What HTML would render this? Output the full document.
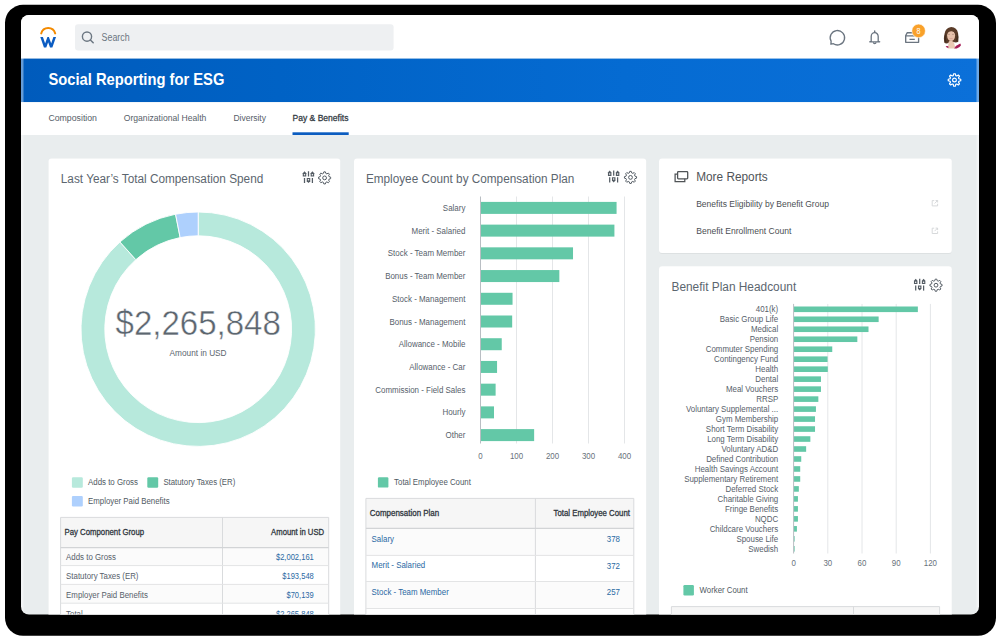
<!DOCTYPE html>
<html><head><meta charset="utf-8"><style>
*{margin:0;padding:0}
html,body{width:1000px;height:642px;overflow:hidden;background:#fff;font-family:"Liberation Sans",sans-serif}
svg{display:block}
</style></head><body>
<svg width="1000" height="642" viewBox="0 0 1000 642" font-family="Liberation Sans, sans-serif">
<defs><clipPath id="app"><rect x="21" y="15" width="958" height="599.5" rx="8"/></clipPath><linearGradient id="bg" x1="0" x2="1" y1="0" y2="0"><stop offset="0" stop-color="#005bbc"/><stop offset="0.27" stop-color="#0062c5"/><stop offset="0.63" stop-color="#056bd2"/><stop offset="1" stop-color="#0b70d9"/></linearGradient><filter id="sh" x="-5%" y="-5%" width="110%" height="110%"><feDropShadow dx="0" dy="0.5" stdDeviation="0.6" flood-color="#000" flood-opacity="0.10"/></filter></defs>
<rect x="5" y="4.8" width="991" height="631" rx="18" fill="#000"/>
<g clip-path="url(#app)">
<rect x="21" y="15" width="958" height="600" fill="#e9edee"/>
<rect x="21" y="15" width="958" height="43.6" fill="#fff"/>
<path d="M41.2 33.4 A7.27 7.27 0 0 1 55.2 33.4" fill="none" stroke="#f38a00" stroke-width="2" stroke-linecap="round"/>
<clipPath id="wclip"><rect x="38" y="37" width="20" height="11.2"/></clipPath>
<path clip-path="url(#wclip)" d="M41.1 35.5 L45.1 47.2 L48.15 38.6 L51.2 47.2 L55.2 35.5" fill="none" stroke="#0b5cc2" stroke-width="2.5" stroke-linejoin="miter" stroke-miterlimit="3"/>
<rect x="75" y="24.3" width="318.6" height="26.2" rx="3" fill="#eef0f2"/>
<circle cx="87" cy="36.6" r="4.6" fill="none" stroke="#6c7782" stroke-width="1.4"/>
<path d="M90.4 40 L93.2 42.8" stroke="#6c7782" stroke-width="1.5" stroke-linecap="round"/>
<text x="101.60" y="41.00" font-size="10" fill="#6c7681" text-anchor="start" textLength="28.00" lengthAdjust="spacingAndGlyphs">Search</text>
<path d="M833.4 43.7 A7.2 7.2 0 1 0 831.1 41.2 L830.9 44.2 Z" fill="none" stroke="#6b7580" stroke-width="1.35" stroke-linejoin="round"/>
<path d="M871.2 41.3 L871.2 36.5 A3.5 3.9 0 0 1 878.2 36.5 L878.2 41.3 L879.7 41.8 L869.7 41.8 Z" fill="none" stroke="#6b7580" stroke-width="1.3" stroke-linejoin="round"/>
<path d="M874.7 31 L874.7 32.4" stroke="#6b7580" stroke-width="1.4" stroke-linecap="round"/>
<path d="M873.4 42.3 A1.3 1.3 0 0 0 876 42.3" fill="none" stroke="#6b7580" stroke-width="1.2"/>
<path d="M905.7 42.3 L905.7 35.5 L907.3 32.7 L917.2 32.7 L918.6 35.5 L918.6 42.3 Z M905.7 35.8 L918.6 35.8" fill="none" stroke="#6b7580" stroke-width="1.35" stroke-linejoin="round"/>
<path d="M909.5 39.3 L914.8 39.3" stroke="#6b7580" stroke-width="1.3"/>
<circle cx="918.6" cy="30.9" r="6.8" fill="#f9a12a" stroke="#fff" stroke-width="0.6"/>
<text x="918.60" y="33.90" font-size="8.2" fill="#fff" text-anchor="middle" textLength="4.00" lengthAdjust="spacingAndGlyphs">8</text>
<g><path d="M944.2 42.5 Q943.3 38 944.6 33.5 Q945.5 27.6 951.2 27 Q957 27.3 958 33 Q959 37.5 958.3 41.8 Q956 43 953.5 42 L949 42.8 Q946 44.2 944.2 42.5 Z" fill="#5a3b28"/><path d="M944.5 40 Q944 36 945.5 33 L946.3 42.5 Q945 42.6 944.5 40 Z" fill="#3f2a1e"/><path d="M957.6 33 Q958.8 37 957.6 41.5 L956 41 Z" fill="#43301f"/><path d="M947.8 48.5 L948.6 42 Q949 40.5 951 41 Q953.3 40.7 954 42.5 L955.5 48.5 Z" fill="#ebc9b4"/><ellipse cx="951.1" cy="35.6" rx="4" ry="5.4" fill="#e7c1aa"/><path d="M946.8 34.5 Q947 29.5 951.3 29.6 Q955.2 29.8 955.4 34 Q954 31.2 951.5 31.3 Q948.5 31.2 946.8 34.5 Z" fill="#5e3f2b"/><path d="M949.3 38.6 L952.7 38.6" stroke="#d79b92" stroke-width="0.8"/><path d="M948.4 34.4 L949.6 34.4 M952.4 34.4 L953.6 34.4" stroke="#8a6a5c" stroke-width="0.7"/><path d="M954.2 48.4 Q956 45 960.3 43.4 L961 45.2 Q959.5 47.8 956.8 48.6 Z" fill="#a61c56"/><path d="M945.6 46.3 Q947 45.6 948.3 46.2 L948.4 48 Q946.5 47.8 945.6 46.3 Z" fill="#a61c56"/></g>
<rect x="21" y="58.6" width="958" height="43.6" fill="url(#bg)"/>
<text x="48.40" y="85.40" font-size="17" fill="#fff" text-anchor="start" font-weight="bold" textLength="176.00" lengthAdjust="spacingAndGlyphs">Social Reporting for ESG</text>
<path d="M953.22 75.58 L953.71 73.75 L955.29 73.75 L955.78 75.58 L956.72 75.97 L958.36 75.02 L959.48 76.14 L958.53 77.78 L958.92 78.72 L960.75 79.21 L960.75 80.79 L958.92 81.28 L958.53 82.22 L959.48 83.86 L958.36 84.98 L956.72 84.03 L955.78 84.42 L955.29 86.25 L953.71 86.25 L953.22 84.42 L952.28 84.03 L950.64 84.98 L949.52 83.86 L950.47 82.22 L950.08 81.28 L948.25 80.79 L948.25 79.21 L950.08 78.72 L950.47 77.78 L949.52 76.14 L950.64 75.02 L952.28 75.97 Z" fill="none" stroke="#fff" stroke-width="1.2" stroke-linejoin="round"/>
<circle cx="954.5" cy="80" r="1.9" fill="none" stroke="#fff" stroke-width="1.2"/>
<rect x="21" y="102.2" width="958" height="32.8" fill="#fff"/>
<text x="48.40" y="120.90" font-size="9.6" fill="#566069" text-anchor="start" textLength="48.60" lengthAdjust="spacingAndGlyphs">Composition</text>
<text x="123.80" y="120.90" font-size="9.6" fill="#566069" text-anchor="start" textLength="82.50" lengthAdjust="spacingAndGlyphs">Organizational Health</text>
<text x="233.40" y="120.90" font-size="9.6" fill="#566069" text-anchor="start" textLength="32.60" lengthAdjust="spacingAndGlyphs">Diversity</text>
<text x="292.60" y="120.90" font-size="9.6" fill="#333b43" text-anchor="start" stroke="#333b43" stroke-width="0.3" textLength="55.80" lengthAdjust="spacingAndGlyphs">Pay &amp; Benefits</text>
<rect x="292.5" y="132.3" width="56.2" height="2.7" fill="#0c5dc0"/>
<rect x="48.5" y="158.5" width="291.8" height="470" rx="3" fill="#fff" filter="url(#sh)"/>
<rect x="354" y="158.5" width="292.2" height="470" rx="3" fill="#fff" filter="url(#sh)"/>
<rect x="659" y="158.5" width="292.8" height="94.6" rx="3" fill="#fff" filter="url(#sh)"/>
<rect x="659" y="266.2" width="292.8" height="400" rx="3" fill="#fff" filter="url(#sh)"/>
<text x="60.80" y="182.60" font-size="12.5" fill="#5c666f" text-anchor="start" textLength="202.50" lengthAdjust="spacingAndGlyphs">Last Year’s Total Compensation Spend</text>
<path d="M304.50 171.30 L306.25 173.20 L306.25 176.60 L302.75 176.60 L302.75 173.20 Z" fill="#545c64"/>
<circle cx="304.50" cy="174.70" r="0.75" fill="#fff"/>
<path d="M304.50 178.00 L304.50 183.10" stroke="#545c64" stroke-width="1.25"/>
<path d="M308.50 171.30 L308.50 176.50" stroke="#545c64" stroke-width="1.25"/>
<path d="M306.75 177.90 L310.25 177.90 L310.25 181.20 L308.50 183.10 L306.75 181.20 Z" fill="#545c64"/>
<circle cx="308.50" cy="179.70" r="0.75" fill="#fff"/>
<path d="M312.40 171.30 L314.15 173.20 L314.15 176.60 L310.65 176.60 L310.65 173.20 Z" fill="#545c64"/>
<circle cx="312.40" cy="174.70" r="0.75" fill="#fff"/>
<path d="M312.40 178.00 L312.40 183.10" stroke="#545c64" stroke-width="1.25"/>
<path d="M323.32 173.48 L323.84 171.85 L325.36 171.85 L325.88 173.48 L326.82 173.87 L328.34 173.08 L329.42 174.16 L328.63 175.68 L329.02 176.62 L330.65 177.14 L330.65 178.66 L329.02 179.18 L328.63 180.12 L329.42 181.64 L328.34 182.72 L326.82 181.93 L325.88 182.32 L325.36 183.95 L323.84 183.95 L323.32 182.32 L322.38 181.93 L320.86 182.72 L319.78 181.64 L320.57 180.12 L320.18 179.18 L318.55 178.66 L318.55 177.14 L320.18 176.62 L320.57 175.68 L319.78 174.16 L320.86 173.08 L322.38 173.87 Z" fill="none" stroke="#545c64" stroke-width="1.0" stroke-linejoin="round"/>
<circle cx="324.6" cy="177.9" r="1.9" fill="none" stroke="#545c64" stroke-width="1.0"/>
<path d="M198.20 212.00 A117.2 117.2 0 1 1 119.94 241.96 L135.83 259.68 A93.4 93.4 0 1 0 198.20 235.80 Z" fill="#b7e9dc" stroke="#fff" stroke-width="0.9"/>
<path d="M119.94 241.96 A117.2 117.2 0 0 1 175.55 214.21 L180.15 237.56 A93.4 93.4 0 0 0 135.83 259.68 Z" fill="#63c8a7" stroke="#fff" stroke-width="0.9"/>
<path d="M175.55 214.21 A117.2 117.2 0 0 1 198.20 212.00 L198.20 235.80 A93.4 93.4 0 0 0 180.15 237.56 Z" fill="#aed0fd" stroke="#fff" stroke-width="0.9"/>
<text x="198.20" y="334.90" font-size="35.5" fill="#5c666f" text-anchor="middle" stroke="#fff" stroke-width="0.45" textLength="165.30" lengthAdjust="spacingAndGlyphs">$2,265,848</text>
<text x="169.60" y="356.20" font-size="9" fill="#5c666f" text-anchor="start" textLength="57.00" lengthAdjust="spacingAndGlyphs">Amount in USD</text>
<rect x="71.9" y="477.3" width="10.9" height="10.5" rx="1.2" fill="#b7e9dc"/>
<text x="88.00" y="485.30" font-size="8.5" fill="#4f5962" text-anchor="start" textLength="50.00" lengthAdjust="spacingAndGlyphs">Adds to Gross</text>
<rect x="147.3" y="477.3" width="10.9" height="10.5" rx="1.2" fill="#63c8a7"/>
<text x="163.40" y="485.30" font-size="8.5" fill="#4f5962" text-anchor="start" textLength="71.90" lengthAdjust="spacingAndGlyphs">Statutory Taxes (ER)</text>
<rect x="71.9" y="495.9" width="10.9" height="10.5" rx="1.2" fill="#aed0fd"/>
<text x="88.00" y="503.90" font-size="8.5" fill="#4f5962" text-anchor="start" textLength="81.60" lengthAdjust="spacingAndGlyphs">Employer Paid Benefits</text>
<rect x="60.6" y="517.4" width="268.09999999999997" height="30.200000000000045" fill="#f6f6f6"/>
<rect x="60.6" y="547.6" width="268.09999999999997" height="18.0" fill="#fbfbfb"/>
<rect x="60.6" y="565.6" width="268.09999999999997" height="18.799999999999955" fill="#ffffff"/>
<rect x="60.6" y="584.4" width="268.09999999999997" height="18.800000000000068" fill="#fbfbfb"/>
<rect x="60.6" y="603.2" width="268.09999999999997" height="36.799999999999955" fill="#ffffff"/>
<path d="M60.6 700 L60.6 517.4 L328.7 517.4 L328.7 700" fill="none" stroke="#d9dbdd" stroke-width="1"/>
<path d="M222.5 517.4 L222.5 700" stroke="#d9dbdd" stroke-width="1"/>
<path d="M60.6 547.6 L328.7 547.6" stroke="#d2d4d6" stroke-width="1.3"/>
<path d="M60.6 565.6 L328.7 565.6" stroke="#e3e4e5" stroke-width="1"/>
<path d="M60.6 584.4 L328.7 584.4" stroke="#e3e4e5" stroke-width="1"/>
<path d="M60.6 603.2 L328.7 603.2" stroke="#e3e4e5" stroke-width="1"/>
<path d="M60.6 640 L328.7 640" stroke="#e3e4e5" stroke-width="1"/>
<text x="64.50" y="535.40" font-size="8.5" fill="#30373e" text-anchor="start" stroke="#30373e" stroke-width="0.3" textLength="79.60" lengthAdjust="spacingAndGlyphs">Pay Component Group</text>
<text x="324.10" y="535.40" font-size="8.5" fill="#30373e" text-anchor="end" stroke="#30373e" stroke-width="0.3" textLength="53.00" lengthAdjust="spacingAndGlyphs">Amount in USD</text>
<text x="66.10" y="560.20" font-size="8.5" fill="#56606a" text-anchor="start" textLength="49.82" lengthAdjust="spacingAndGlyphs">Adds to Gross</text>
<text x="313.80" y="560.20" font-size="8.5" fill="#2a69a3" text-anchor="end" textLength="37.86" lengthAdjust="spacingAndGlyphs">$2,002,161</text>
<text x="66.10" y="579.00" font-size="8.5" fill="#56606a" text-anchor="start" textLength="72.39" lengthAdjust="spacingAndGlyphs">Statutory Taxes (ER)</text>
<text x="313.80" y="579.00" font-size="8.5" fill="#2a69a3" text-anchor="end" textLength="31.55" lengthAdjust="spacingAndGlyphs">$193,548</text>
<text x="66.10" y="597.80" font-size="8.5" fill="#56606a" text-anchor="start" textLength="81.73" lengthAdjust="spacingAndGlyphs">Employer Paid Benefits</text>
<text x="313.80" y="597.80" font-size="8.5" fill="#2a69a3" text-anchor="end" textLength="27.35" lengthAdjust="spacingAndGlyphs">$70,139</text>
<text x="66.10" y="616.60" font-size="8.5" fill="#56606a" text-anchor="start" textLength="16.61" lengthAdjust="spacingAndGlyphs">Total</text>
<text x="313.80" y="616.60" font-size="8.5" fill="#2a69a3" text-anchor="end" textLength="37.86" lengthAdjust="spacingAndGlyphs">$2,265,848</text>
<text x="365.90" y="183.00" font-size="12.5" fill="#5c666f" text-anchor="start" textLength="208.50" lengthAdjust="spacingAndGlyphs">Employee Count by Compensation Plan</text>
<path d="M609.70 170.60 L611.45 172.50 L611.45 175.90 L607.95 175.90 L607.95 172.50 Z" fill="#545c64"/>
<circle cx="609.70" cy="174.00" r="0.75" fill="#fff"/>
<path d="M609.70 177.30 L609.70 182.40" stroke="#545c64" stroke-width="1.25"/>
<path d="M613.70 170.60 L613.70 175.80" stroke="#545c64" stroke-width="1.25"/>
<path d="M611.95 177.20 L615.45 177.20 L615.45 180.50 L613.70 182.40 L611.95 180.50 Z" fill="#545c64"/>
<circle cx="613.70" cy="179.00" r="0.75" fill="#fff"/>
<path d="M617.60 170.60 L619.35 172.50 L619.35 175.90 L615.85 175.90 L615.85 172.50 Z" fill="#545c64"/>
<circle cx="617.60" cy="174.00" r="0.75" fill="#fff"/>
<path d="M617.60 177.30 L617.60 182.40" stroke="#545c64" stroke-width="1.25"/>
<path d="M629.22 172.98 L629.74 171.35 L631.26 171.35 L631.78 172.98 L632.72 173.37 L634.24 172.58 L635.32 173.66 L634.53 175.18 L634.92 176.12 L636.55 176.64 L636.55 178.16 L634.92 178.68 L634.53 179.62 L635.32 181.14 L634.24 182.22 L632.72 181.43 L631.78 181.82 L631.26 183.45 L629.74 183.45 L629.22 181.82 L628.28 181.43 L626.76 182.22 L625.68 181.14 L626.47 179.62 L626.08 178.68 L624.45 178.16 L624.45 176.64 L626.08 176.12 L626.47 175.18 L625.68 173.66 L626.76 172.58 L628.28 173.37 Z" fill="none" stroke="#545c64" stroke-width="1.0" stroke-linejoin="round"/>
<circle cx="630.5" cy="177.4" r="1.9" fill="none" stroke="#545c64" stroke-width="1.0"/>
<path d="M516.50 196.5 L516.50 443.5" stroke="#e4e6e8" stroke-width="1"/>
<path d="M552.50 196.5 L552.50 443.5" stroke="#e4e6e8" stroke-width="1"/>
<path d="M588.50 196.5 L588.50 443.5" stroke="#e4e6e8" stroke-width="1"/>
<path d="M624.50 196.5 L624.50 443.5" stroke="#e4e6e8" stroke-width="1"/>
<rect x="480.50" y="201.90" width="136.08" height="12" fill="#63c8a7"/>
<text x="465.40" y="210.90" font-size="8.5" fill="#56606a" text-anchor="end" textLength="22.53" lengthAdjust="spacingAndGlyphs">Salary</text>
<rect x="480.50" y="224.62" width="133.92" height="12" fill="#63c8a7"/>
<text x="465.40" y="233.62" font-size="8.5" fill="#56606a" text-anchor="end" textLength="53.88" lengthAdjust="spacingAndGlyphs">Merit - Salaried</text>
<rect x="480.50" y="247.34" width="92.52" height="12" fill="#63c8a7"/>
<text x="465.40" y="256.34" font-size="8.5" fill="#56606a" text-anchor="end" textLength="77.59" lengthAdjust="spacingAndGlyphs">Stock - Team Member</text>
<rect x="480.50" y="270.06" width="78.84" height="12" fill="#63c8a7"/>
<text x="465.40" y="279.06" font-size="8.5" fill="#56606a" text-anchor="end" textLength="80.25" lengthAdjust="spacingAndGlyphs">Bonus - Team Member</text>
<rect x="480.50" y="292.78" width="32.04" height="12" fill="#63c8a7"/>
<text x="465.40" y="301.78" font-size="8.5" fill="#56606a" text-anchor="end" textLength="73.33" lengthAdjust="spacingAndGlyphs">Stock - Management</text>
<rect x="480.50" y="315.50" width="31.68" height="12" fill="#63c8a7"/>
<text x="465.40" y="324.50" font-size="8.5" fill="#56606a" text-anchor="end" textLength="75.99" lengthAdjust="spacingAndGlyphs">Bonus - Management</text>
<rect x="480.50" y="338.22" width="21.24" height="12" fill="#63c8a7"/>
<text x="465.40" y="347.22" font-size="8.5" fill="#56606a" text-anchor="end" textLength="66.70" lengthAdjust="spacingAndGlyphs">Allowance - Mobile</text>
<rect x="480.50" y="360.94" width="16.56" height="12" fill="#63c8a7"/>
<text x="465.40" y="369.94" font-size="8.5" fill="#56606a" text-anchor="end" textLength="56.10" lengthAdjust="spacingAndGlyphs">Allowance - Car</text>
<rect x="480.50" y="383.66" width="15.12" height="12" fill="#63c8a7"/>
<text x="465.40" y="392.66" font-size="8.5" fill="#56606a" text-anchor="end" textLength="90.10" lengthAdjust="spacingAndGlyphs">Commission - Field Sales</text>
<rect x="480.50" y="406.38" width="13.50" height="12" fill="#63c8a7"/>
<text x="465.40" y="415.38" font-size="8.5" fill="#56606a" text-anchor="end" textLength="22.97" lengthAdjust="spacingAndGlyphs">Hourly</text>
<rect x="480.50" y="429.10" width="53.64" height="12" fill="#63c8a7"/>
<text x="465.40" y="438.10" font-size="8.5" fill="#56606a" text-anchor="end" textLength="19.88" lengthAdjust="spacingAndGlyphs">Other</text>
<path d="M480.5 196.5 L480.5 443.5" stroke="#b9bec3" stroke-width="1"/>
<text x="480.50" y="458.50" font-size="8.5" fill="#68717a" text-anchor="middle" textLength="4.40" lengthAdjust="spacingAndGlyphs">0</text>
<text x="516.50" y="458.50" font-size="8.5" fill="#68717a" text-anchor="middle" textLength="13.19" lengthAdjust="spacingAndGlyphs">100</text>
<text x="552.50" y="458.50" font-size="8.5" fill="#68717a" text-anchor="middle" textLength="13.19" lengthAdjust="spacingAndGlyphs">200</text>
<text x="588.50" y="458.50" font-size="8.5" fill="#68717a" text-anchor="middle" textLength="13.19" lengthAdjust="spacingAndGlyphs">300</text>
<text x="624.50" y="458.50" font-size="8.5" fill="#68717a" text-anchor="middle" textLength="13.19" lengthAdjust="spacingAndGlyphs">400</text>
<rect x="377.9" y="477.2" width="10.5" height="10.4" rx="1.2" fill="#63c8a7"/>
<text x="394.10" y="485.30" font-size="8.5" fill="#4f5962" text-anchor="start" textLength="76.80" lengthAdjust="spacingAndGlyphs">Total Employee Count</text>
<rect x="365.9" y="498.4" width="267.9" height="30.0" fill="#f6f6f6"/>
<rect x="365.9" y="528.4" width="267.9" height="27.0" fill="#fbfbfb"/>
<rect x="365.9" y="555.4" width="267.9" height="26.100000000000023" fill="#ffffff"/>
<rect x="365.9" y="581.5" width="267.9" height="27.0" fill="#fbfbfb"/>
<rect x="365.9" y="608.5" width="267.9" height="31.5" fill="#ffffff"/>
<path d="M365.9 700 L365.9 498.4 L633.8 498.4 L633.8 700" fill="none" stroke="#d9dbdd" stroke-width="1"/>
<path d="M535.4 498.4 L535.4 700" stroke="#d9dbdd" stroke-width="1"/>
<path d="M365.9 528.4 L633.8 528.4" stroke="#d2d4d6" stroke-width="1.3"/>
<path d="M365.9 555.4 L633.8 555.4" stroke="#e3e4e5" stroke-width="1"/>
<path d="M365.9 581.5 L633.8 581.5" stroke="#e3e4e5" stroke-width="1"/>
<path d="M365.9 608.5 L633.8 608.5" stroke="#e3e4e5" stroke-width="1"/>
<path d="M365.9 640 L633.8 640" stroke="#e3e4e5" stroke-width="1"/>
<text x="369.80" y="516.40" font-size="8.5" fill="#30373e" text-anchor="start" stroke="#30373e" stroke-width="0.3" textLength="69.40" lengthAdjust="spacingAndGlyphs">Compensation Plan</text>
<text x="630.00" y="516.40" font-size="8.5" fill="#30373e" text-anchor="end" stroke="#30373e" stroke-width="0.3" textLength="76.50" lengthAdjust="spacingAndGlyphs">Total Employee Count</text>
<text x="371.60" y="541.70" font-size="8.5" fill="#2a69a3" text-anchor="start" textLength="22.41" lengthAdjust="spacingAndGlyphs">Salary</text>
<text x="620.00" y="542.10" font-size="8.5" fill="#2a69a3" text-anchor="end" textLength="13.19" lengthAdjust="spacingAndGlyphs">378</text>
<text x="371.60" y="568.10" font-size="8.5" fill="#2a69a3" text-anchor="start" textLength="53.60" lengthAdjust="spacingAndGlyphs">Merit - Salaried</text>
<text x="620.00" y="568.50" font-size="8.5" fill="#2a69a3" text-anchor="end" textLength="13.19" lengthAdjust="spacingAndGlyphs">372</text>
<text x="371.60" y="594.50" font-size="8.5" fill="#2a69a3" text-anchor="start" textLength="77.17" lengthAdjust="spacingAndGlyphs">Stock - Team Member</text>
<text x="620.00" y="594.90" font-size="8.5" fill="#2a69a3" text-anchor="end" textLength="13.19" lengthAdjust="spacingAndGlyphs">257</text>
<path d="M677.5 174.1 L675.1 174.1 L675.1 181.6 L684.8 181.6 L684.8 178.8" fill="none" stroke="#4f5356" stroke-width="1.25"/>
<rect x="677.6" y="171.6" width="10.1" height="7.2" rx="0.8" fill="none" stroke="#4f5356" stroke-width="1.3"/>
<text x="696.20" y="181.40" font-size="12.5" fill="#505458" text-anchor="start" textLength="71.60" lengthAdjust="spacingAndGlyphs">More Reports</text>
<text x="696.20" y="206.80" font-size="8.5" fill="#4b4f53" text-anchor="start" textLength="132.70" lengthAdjust="spacingAndGlyphs">Benefits Eligibility by Benefit Group</text>
<text x="696.20" y="234.20" font-size="8.5" fill="#4b4f53" text-anchor="start" textLength="95.10" lengthAdjust="spacingAndGlyphs">Benefit Enrollment Count</text>
<path d="M934.2 200.6 L932.2 200.6 L932.2 205.9 L937.6 205.9 L937.6 203.8 M934.6 203.5 L937.6 200.5 M935.6 200.5 L937.6 200.5 L937.6 202.5" fill="none" stroke="#d3d5d7" stroke-width="0.9"/>
<path d="M934.2 228.2 L932.2 228.2 L932.2 233.5 L937.6 233.5 L937.6 231.4 M934.6 231.1 L937.6 228.1 M935.6 228.1 L937.6 228.1 L937.6 230.1" fill="none" stroke="#d3d5d7" stroke-width="0.9"/>
<text x="671.50" y="290.50" font-size="12.5" fill="#5c666f" text-anchor="start" textLength="124.70" lengthAdjust="spacingAndGlyphs">Benefit Plan Headcount</text>
<path d="M915.70 278.80 L917.45 280.70 L917.45 284.10 L913.95 284.10 L913.95 280.70 Z" fill="#545c64"/>
<circle cx="915.70" cy="282.20" r="0.75" fill="#fff"/>
<path d="M915.70 285.50 L915.70 290.60" stroke="#545c64" stroke-width="1.25"/>
<path d="M919.70 278.80 L919.70 284.00" stroke="#545c64" stroke-width="1.25"/>
<path d="M917.95 285.40 L921.45 285.40 L921.45 288.70 L919.70 290.60 L917.95 288.70 Z" fill="#545c64"/>
<circle cx="919.70" cy="287.20" r="0.75" fill="#fff"/>
<path d="M923.60 278.80 L925.35 280.70 L925.35 284.10 L921.85 284.10 L921.85 280.70 Z" fill="#545c64"/>
<circle cx="923.60" cy="282.20" r="0.75" fill="#fff"/>
<path d="M923.60 285.50 L923.60 290.60" stroke="#545c64" stroke-width="1.25"/>
<path d="M934.72 280.78 L935.24 279.15 L936.76 279.15 L937.28 280.78 L938.22 281.17 L939.74 280.38 L940.82 281.46 L940.03 282.98 L940.42 283.92 L942.05 284.44 L942.05 285.96 L940.42 286.48 L940.03 287.42 L940.82 288.94 L939.74 290.02 L938.22 289.23 L937.28 289.62 L936.76 291.25 L935.24 291.25 L934.72 289.62 L933.78 289.23 L932.26 290.02 L931.18 288.94 L931.97 287.42 L931.58 286.48 L929.95 285.96 L929.95 284.44 L931.58 283.92 L931.97 282.98 L931.18 281.46 L932.26 280.38 L933.78 281.17 Z" fill="none" stroke="#545c64" stroke-width="1.0" stroke-linejoin="round"/>
<circle cx="936" cy="285.2" r="1.9" fill="none" stroke="#545c64" stroke-width="1.0"/>
<path d="M827.80 303.9 L827.80 553.5" stroke="#e4e6e8" stroke-width="1"/>
<path d="M862.00 303.9 L862.00 553.5" stroke="#e4e6e8" stroke-width="1"/>
<path d="M896.20 303.9 L896.20 553.5" stroke="#e4e6e8" stroke-width="1"/>
<path d="M930.40 303.9 L930.40 553.5" stroke="#e4e6e8" stroke-width="1"/>
<rect x="793.60" y="306.50" width="124.26" height="5.6" fill="#63c8a7"/>
<text x="778.20" y="312.30" font-size="8.5" fill="#56606a" text-anchor="end" textLength="22.41" lengthAdjust="spacingAndGlyphs">401(k)</text>
<rect x="793.60" y="316.48" width="85.04" height="5.6" fill="#63c8a7"/>
<text x="778.20" y="322.28" font-size="8.5" fill="#56606a" text-anchor="end" textLength="58.44" lengthAdjust="spacingAndGlyphs">Basic Group Life</text>
<rect x="793.60" y="326.46" width="74.90" height="5.6" fill="#63c8a7"/>
<text x="778.20" y="332.26" font-size="8.5" fill="#56606a" text-anchor="end" textLength="27.24" lengthAdjust="spacingAndGlyphs">Medical</text>
<rect x="793.60" y="336.44" width="63.73" height="5.6" fill="#63c8a7"/>
<text x="778.20" y="342.24" font-size="8.5" fill="#56606a" text-anchor="end" textLength="28.57" lengthAdjust="spacingAndGlyphs">Pension</text>
<rect x="793.60" y="346.42" width="38.65" height="5.6" fill="#63c8a7"/>
<text x="778.20" y="352.22" font-size="8.5" fill="#56606a" text-anchor="end" textLength="72.50" lengthAdjust="spacingAndGlyphs">Commuter Spending</text>
<rect x="793.60" y="356.40" width="33.97" height="5.6" fill="#63c8a7"/>
<text x="778.20" y="362.20" font-size="8.5" fill="#56606a" text-anchor="end" textLength="64.16" lengthAdjust="spacingAndGlyphs">Contingency Fund</text>
<rect x="793.60" y="366.38" width="34.20" height="5.6" fill="#63c8a7"/>
<text x="778.20" y="372.18" font-size="8.5" fill="#56606a" text-anchor="end" textLength="22.85" lengthAdjust="spacingAndGlyphs">Health</text>
<rect x="793.60" y="376.35" width="27.36" height="5.6" fill="#63c8a7"/>
<text x="778.20" y="382.15" font-size="8.5" fill="#56606a" text-anchor="end" textLength="22.85" lengthAdjust="spacingAndGlyphs">Dental</text>
<rect x="793.60" y="386.33" width="27.36" height="5.6" fill="#63c8a7"/>
<text x="778.20" y="392.13" font-size="8.5" fill="#56606a" text-anchor="end" textLength="52.29" lengthAdjust="spacingAndGlyphs">Meal Vouchers</text>
<rect x="793.60" y="396.31" width="24.74" height="5.6" fill="#63c8a7"/>
<text x="778.20" y="402.11" font-size="8.5" fill="#56606a" text-anchor="end" textLength="21.96" lengthAdjust="spacingAndGlyphs">RRSP</text>
<rect x="793.60" y="406.29" width="22.34" height="5.6" fill="#63c8a7"/>
<text x="778.20" y="412.09" font-size="8.5" fill="#56606a" text-anchor="end" textLength="92.28" lengthAdjust="spacingAndGlyphs">Voluntary Supplemental ...</text>
<rect x="793.60" y="416.27" width="21.43" height="5.6" fill="#63c8a7"/>
<text x="778.20" y="422.07" font-size="8.5" fill="#56606a" text-anchor="end" textLength="62.38" lengthAdjust="spacingAndGlyphs">Gym Membership</text>
<rect x="793.60" y="426.25" width="21.43" height="5.6" fill="#63c8a7"/>
<text x="778.20" y="432.05" font-size="8.5" fill="#56606a" text-anchor="end" textLength="72.34" lengthAdjust="spacingAndGlyphs">Short Term Disability</text>
<rect x="793.60" y="436.23" width="16.76" height="5.6" fill="#63c8a7"/>
<text x="778.20" y="442.03" font-size="8.5" fill="#56606a" text-anchor="end" textLength="71.03" lengthAdjust="spacingAndGlyphs">Long Term Disability</text>
<rect x="793.60" y="446.21" width="12.54" height="5.6" fill="#63c8a7"/>
<text x="778.20" y="452.01" font-size="8.5" fill="#56606a" text-anchor="end" textLength="56.68" lengthAdjust="spacingAndGlyphs">Voluntary AD&amp;D</text>
<rect x="793.60" y="456.19" width="7.64" height="5.6" fill="#63c8a7"/>
<text x="778.20" y="461.99" font-size="8.5" fill="#56606a" text-anchor="end" textLength="72.07" lengthAdjust="spacingAndGlyphs">Defined Contribution</text>
<rect x="793.60" y="466.17" width="6.61" height="5.6" fill="#63c8a7"/>
<text x="778.20" y="471.97" font-size="8.5" fill="#56606a" text-anchor="end" textLength="83.49" lengthAdjust="spacingAndGlyphs">Health Savings Account</text>
<rect x="793.60" y="476.15" width="6.61" height="5.6" fill="#63c8a7"/>
<text x="778.20" y="481.95" font-size="8.5" fill="#56606a" text-anchor="end" textLength="94.03" lengthAdjust="spacingAndGlyphs">Supplementary Retirement</text>
<rect x="793.60" y="486.12" width="5.24" height="5.6" fill="#63c8a7"/>
<text x="778.20" y="491.93" font-size="8.5" fill="#56606a" text-anchor="end" textLength="52.72" lengthAdjust="spacingAndGlyphs">Deferred Stock</text>
<rect x="793.60" y="496.10" width="4.33" height="5.6" fill="#63c8a7"/>
<text x="778.20" y="501.90" font-size="8.5" fill="#56606a" text-anchor="end" textLength="60.64" lengthAdjust="spacingAndGlyphs">Charitable Giving</text>
<rect x="793.60" y="506.08" width="4.33" height="5.6" fill="#63c8a7"/>
<text x="778.20" y="511.88" font-size="8.5" fill="#56606a" text-anchor="end" textLength="53.17" lengthAdjust="spacingAndGlyphs">Fringe Benefits</text>
<rect x="793.60" y="516.06" width="4.33" height="5.6" fill="#63c8a7"/>
<text x="778.20" y="521.86" font-size="8.5" fill="#56606a" text-anchor="end" textLength="23.28" lengthAdjust="spacingAndGlyphs">NQDC</text>
<rect x="793.60" y="526.04" width="3.31" height="5.6" fill="#63c8a7"/>
<text x="778.20" y="531.84" font-size="8.5" fill="#56606a" text-anchor="end" textLength="68.55" lengthAdjust="spacingAndGlyphs">Childcare Vouchers</text>
<rect x="793.60" y="536.02" width="1.03" height="5.6" fill="#63c8a7"/>
<text x="778.20" y="541.82" font-size="8.5" fill="#56606a" text-anchor="end" textLength="41.75" lengthAdjust="spacingAndGlyphs">Spouse Life</text>
<rect x="793.60" y="546.00" width="1.03" height="5.6" fill="#63c8a7"/>
<text x="778.20" y="551.80" font-size="8.5" fill="#56606a" text-anchor="end" textLength="29.88" lengthAdjust="spacingAndGlyphs">Swedish</text>
<path d="M793.6 303.9 L793.6 553.5" stroke="#b9bec3" stroke-width="1"/>
<text x="793.60" y="566.10" font-size="8.5" fill="#68717a" text-anchor="middle" textLength="4.40" lengthAdjust="spacingAndGlyphs">0</text>
<text x="827.80" y="566.10" font-size="8.5" fill="#68717a" text-anchor="middle" textLength="8.79" lengthAdjust="spacingAndGlyphs">30</text>
<text x="862.00" y="566.10" font-size="8.5" fill="#68717a" text-anchor="middle" textLength="8.79" lengthAdjust="spacingAndGlyphs">60</text>
<text x="896.20" y="566.10" font-size="8.5" fill="#68717a" text-anchor="middle" textLength="8.79" lengthAdjust="spacingAndGlyphs">90</text>
<text x="930.40" y="566.10" font-size="8.5" fill="#68717a" text-anchor="middle" textLength="13.19" lengthAdjust="spacingAndGlyphs">120</text>
<rect x="683.4" y="585.1" width="10.5" height="10.4" rx="1.2" fill="#63c8a7"/>
<text x="699.60" y="593.00" font-size="8.5" fill="#4f5962" text-anchor="start" textLength="48.00" lengthAdjust="spacingAndGlyphs">Worker Count</text>
<rect x="671.4" y="606.6" width="268.20000000000005" height="33.39999999999998" fill="#f6f6f6"/>
<path d="M671.4 700 L671.4 606.6 L939.6 606.6 L939.6 700" fill="none" stroke="#d9dbdd" stroke-width="1"/>
<path d="M853.5 606.6 L853.5 700" stroke="#d9dbdd" stroke-width="1"/>
<path d="M671.4 640 L939.6 640" stroke="#d2d4d6" stroke-width="1.3"/>
<rect x="21" y="15" width="2.5" height="600" fill="#fff" opacity="0.4"/>
<rect x="976.5" y="15" width="2.5" height="600" fill="#fff" opacity="0.4"/>
</g>
</svg>
</body></html>
